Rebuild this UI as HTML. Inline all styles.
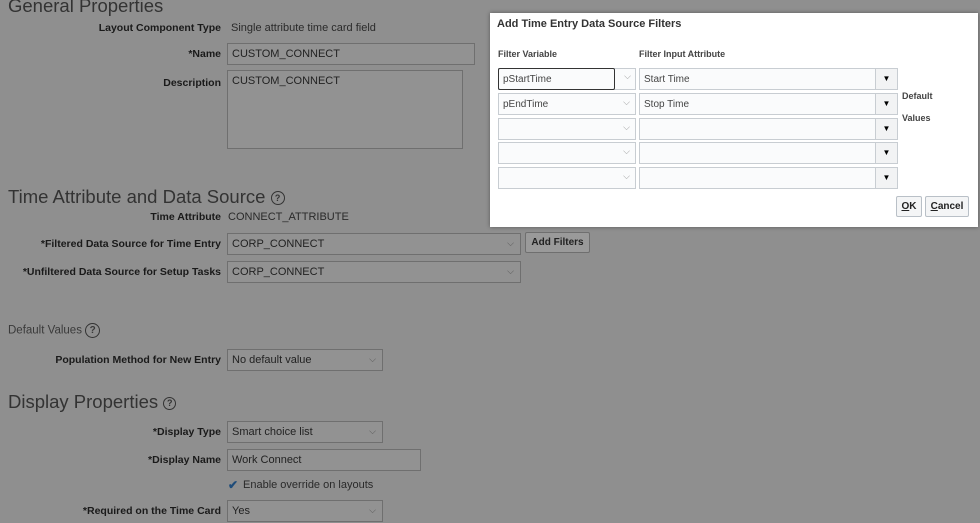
<!DOCTYPE html>
<html><head><style>
body{margin:0;width:980px;height:523px;overflow:hidden;background:#8f8f8f;font-family:"Liberation Sans",sans-serif;color:#1e1e1e;position:relative}
.a{position:absolute;white-space:nowrap}
.h{font-size:18.5px;font-weight:300;color:#333}
.l{font-size:10.5px;font-weight:bold;text-align:right;width:300px;color:#1a1a1a}
.v{font-size:11px;color:#2a2a2a}
.in{position:absolute;box-sizing:border-box;border:1px solid #6f6f6f;background:#929292;font-size:11px;padding:4px 4px;color:#222}
.chev{position:absolute;right:6px;top:4px;font-size:9px;color:#555}
.q{display:inline-block;width:13px;height:13px;border:1.5px solid #333;border-radius:50%;font-size:10px;text-align:center;line-height:13px;vertical-align:middle;font-weight:bold}
.d{position:absolute;left:490px;top:13px;width:488px;height:214px;background:#fff;box-shadow:0 0 4px rgba(0,0,0,.4)}
.di{position:absolute;box-sizing:border-box;border:1px solid #c8cdd2;background:#fafbfc;font-size:10px;color:#444;padding:5px 4px;height:22px}
.dc{position:absolute;right:5px;top:3px;font-size:9px;color:#999}
.db{position:absolute;right:0;top:0;width:21px;height:20px;border-left:1px solid #c8cdd2;background:#f2f3f4;font-size:8px;text-align:center;line-height:20px;color:#000}
.btn{position:absolute;box-sizing:border-box;border:1px solid #b9c0c7;background:#f4f5f6;border-radius:2px;font-size:10px;font-weight:bold;text-align:center;line-height:19px;height:21px;color:#222}
</style></head><body>
<div class="a h" style="left:8px;top:-5px">General Properties</div>
<div class="a l" style="left:-79px;top:22px">Layout Component Type</div>
<div class="a v" style="left:231px;top:22px">Single attribute time card field</div>
<div class="a l" style="left:-79px;top:48px">*Name</div>
<div class="in" style="left:227px;top:43px;width:248px;height:22px">CUSTOM_CONNECT</div>
<div class="a l" style="left:-79px;top:77px">Description</div>
<div class="in" style="left:227px;top:70px;width:236px;height:79px">CUSTOM_CONNECT</div>
<div class="a h" style="left:8px;top:186px">Time Attribute and Data Source <span class="q" style="width:12px;height:12px;font-size:9px;line-height:12px">?</span></div>
<div class="a l" style="left:-79px;top:211px">Time Attribute</div>
<div class="a v" style="left:228px;top:211px">CONNECT_ATTRIBUTE</div>
<div class="a l" style="left:-79px;top:238px">*Filtered Data Source for Time Entry</div>
<div class="in" style="left:227px;top:233px;width:294px;height:22px">CORP_CONNECT<span class="chev">⌵</span></div>
<div class="btn" style="left:525px;top:232px;width:65px;background:#9a9a9a;border-color:#6f6f6f">Add Filters</div>
<div class="a l" style="left:-79px;top:266px">*Unfiltered Data Source for Setup Tasks</div>
<div class="in" style="left:227px;top:261px;width:294px;height:22px">CORP_CONNECT<span class="chev">⌵</span></div>
<div class="a" style="left:8px;top:323px;font-size:11.5px;font-weight:300;color:#3a3a3a">Default Values <span class="q">?</span></div>
<div class="a l" style="left:-79px;top:354px">Population Method for New Entry</div>
<div class="in" style="left:227px;top:349px;width:156px;height:22px">No default value<span class="chev">⌵</span></div>
<div class="a h" style="left:8px;top:391px">Display Properties <span class="q" style="width:11px;height:11px;font-size:9px;line-height:11px">?</span></div>
<div class="a l" style="left:-79px;top:426px">*Display Type</div>
<div class="in" style="left:227px;top:421px;width:156px;height:22px">Smart choice list<span class="chev">⌵</span></div>
<div class="a l" style="left:-79px;top:454px">*Display Name</div>
<div class="in" style="left:227px;top:449px;width:194px;height:22px">Work Connect</div>
<div class="a" style="left:228px;top:478px;font-size:12px;color:#1f4c7a;font-weight:bold">✔</div>
<div class="a v" style="left:243px;top:479px">Enable override on layouts</div>
<div class="a l" style="left:-79px;top:505px">*Required on the Time Card</div>
<div class="in" style="left:227px;top:500px;width:156px;height:22px">Yes<span class="chev">⌵</span></div>

<div class="d">
<div class="a" style="left:7px;top:5px;font-size:11px;font-weight:bold;color:#333">Add Time Entry Data Source Filters</div>
<div class="a" style="left:8px;top:36px;font-size:9px;font-weight:bold;color:#444">Filter Variable</div>
<div class="a" style="left:149px;top:36px;font-size:9px;font-weight:bold;color:#444">Filter Input Attribute</div>
<div class="di" style="left:8px;top:55px;width:138px;border:none">
<div style="position:absolute;left:0;top:0;width:138px;height:22px;box-sizing:border-box;border:1px solid #c8cdd2"></div>
<div style="position:absolute;left:0;top:0;width:117px;height:22px;box-sizing:border-box;border:1.5px solid #333;border-radius:2px;padding:5px 4px">pStartTime</div>
<span class="dc">⌵</span></div>
<div class="di" style="left:149px;top:55px;width:259px">Start Time<span class="db">▼</span></div>
<div class="di" style="left:8px;top:80px;width:138px">pEndTime<span class="dc">⌵</span></div>
<div class="di" style="left:149px;top:80px;width:259px">Stop Time<span class="db">▼</span></div>
<div class="di" style="left:8px;top:105px;width:138px"><span class="dc">⌵</span></div>
<div class="di" style="left:149px;top:105px;width:259px"><span class="db">▼</span></div>
<div class="di" style="left:8px;top:129px;width:138px"><span class="dc">⌵</span></div>
<div class="di" style="left:149px;top:129px;width:259px"><span class="db">▼</span></div>
<div class="di" style="left:8px;top:154px;width:138px"><span class="dc">⌵</span></div>
<div class="di" style="left:149px;top:154px;width:259px"><span class="db">▼</span></div>
<div class="a" style="left:412px;top:78px;font-size:9px;font-weight:bold;color:#444">Default</div>
<div class="a" style="left:412px;top:100px;font-size:9px;font-weight:bold;color:#444">Values</div>
<div class="btn" style="left:406px;top:183px;width:26px"><u>O</u>K</div>
<div class="btn" style="left:435px;top:183px;width:44px"><u>C</u>ancel</div>
</div>
</body></html>
